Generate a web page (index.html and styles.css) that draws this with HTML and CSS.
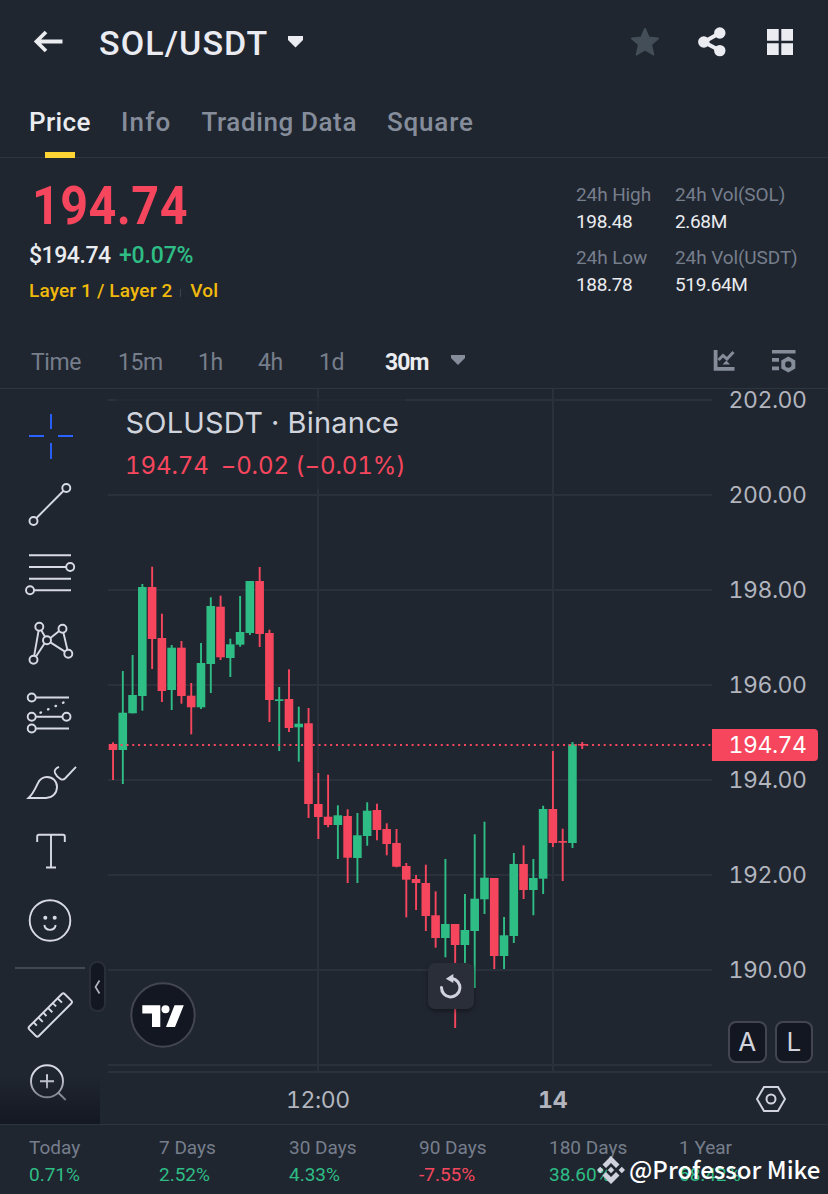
FILE: index.html
```html
<!DOCTYPE html>
<html lang="en">
<head>
    <meta charset="UTF-8">
    <meta name="viewport" content="width=device-width, initial-scale=1.0">
    <title>SOL/USDT</title>
    <link rel="stylesheet" href="styles.css">
</head>
<body>
    <header class="topbar">
        <svg class="back" width="30" height="24" viewBox="0 0 30 24"><path d="M13 2L3.5 11.5L13 21M4 11.5H29.5"/></svg>
        <h1 class="pair">SOL/USDT</h1>
        <svg class="caret" width="15" height="12" viewBox="0 0 15 12"><path d="M0 0H15V4L7.5 11.5L0 4Z"/></svg>
        <div class="top-actions">
            <svg class="star" width="30" height="30" viewBox="0 0 30 30"><path d="M15 2L18.7 10.6L28 11.4L21 17.6L23.3 27.5L15 22.5L6.7 27.5L9 17.6L2 11.4L11.3 10.6Z"/></svg>
            <svg class="share" width="30" height="30" viewBox="0 0 30 30"><path d="M22.8 6L6.8 15L22.8 23.6"/><circle cx="22.8" cy="6" r="5.7"/><circle cx="6.8" cy="15" r="5.7"/><circle cx="22.8" cy="23.6" r="5.7"/></svg>
            <svg class="apps" width="26" height="26" viewBox="0 0 26 26"><path d="M0 0H11.7V11.7H0ZM14.3 0H26V11.7H14.3ZM0 14.3H11.7V26H0ZM14.3 14.3H26V26H14.3Z"/></svg>
        </div>
    </header>

    <nav class="tabs">
        <a class="tab active">Price</a>
        <a class="tab tab-info">Info</a>
        <a class="tab tab-data">Trading Data</a>
        <a class="tab tab-square">Square</a>
    </nav>

    <section class="summary">
        <div class="quote">
            <div class="last-price">194.74</div>
            <div class="fiat">$194.74 <span class="up">+0.07%</span></div>
            <div class="tags"><span>Layer 1 / Layer 2</span><i class="tag-sep"></i><span>Vol</span></div>
        </div>
        <div class="stats">
            <div class="stat"><span>24h High</span><b>198.48</b></div>
            <div class="stat"><span>24h Vol(SOL)</span><b>2.68M</b></div>
            <div class="stat"><span>24h Low</span><b>188.78</b></div>
            <div class="stat"><span>24h Vol(USDT)</span><b>519.64M</b></div>
        </div>
    </section>

    <div class="intervals">
        <div class="interval-list">
            <span>Time</span>
            <span>15m</span>
            <span>1h</span>
            <span>4h</span>
            <span>1d</span>
            <span class="selected">30m</span>
        </div>
        <svg class="more" width="14" height="10" viewBox="0 0 14 10"><path d="M0 0H14V3L7 10L0 3Z"/></svg>
        <div class="interval-icons">
            <svg width="24" height="24" viewBox="0 0 24 24"><path class="line" d="M3.6 1V19.8H22.5" stroke-width="3.8"/><path class="line" d="M6.5 11L11 6.5L15 10L21.5 3" stroke-width="3"/><path d="M14.3 11.5L18 15.5H10.5Z"/></svg>
            <svg width="26" height="24" viewBox="0 0 26 24"><path d="M1 1H24.5V4.5H1ZM1 9H8V12.7H1ZM1 17.5H8V21.3H1Z"/><path fill-rule="evenodd" d="M17.3 7.5L24.3 11.5V19.5L17.3 23.5L10.3 19.5V11.5ZM17.3 12.3A3.2 3.2 0 1 0 17.3 18.7A3.2 3.2 0 1 0 17.3 12.3Z"/></svg>
        </div>
    </div>

    <main class="chart">
        <aside class="toolbar">
            <svg class="tool cross" viewBox="0 0 56 56"><path d="M29 6V21M29 35V51M7 28H22M36 28H51"/></svg>
            <svg class="tool" viewBox="0 0 56 56"><path d="M14.5 41L41.3 14"/><circle cx="44.3" cy="11" r="4"/><circle cx="11.5" cy="44" r="4"/></svg>
            <svg class="tool" viewBox="0 0 56 56"><path d="M7 9.3H49M7 21H44M7 32.7H49M12 44.3H49"/><circle cx="48.2" cy="21" r="4"/><circle cx="8" cy="44.3" r="4"/></svg>
            <svg class="tool" viewBox="0 0 56 56"><path d="M12.2 40.7L16.6 15.7M19.3 15.2L23 21.8M14 41.5L22.5 28.5M28.4 23L37.2 16M41.4 17.6L45.4 34.8M28.4 27.4L42.9 36.6"/><circle cx="17.3" cy="11.7" r="4"/><circle cx="40.5" cy="13.7" r="4"/><circle cx="25" cy="25.3" r="4"/><circle cx="46.3" cy="38.7" r="4"/><circle cx="11.5" cy="44.7" r="4"/></svg>
            <svg class="tool" viewBox="0 0 56 56"><path d="M14 13.5H47M14 32.8H40.5M14 44.5H47"/><path class="dots" d="M18.5 28.7L45 17"/><circle cx="9.7" cy="13.5" r="4"/><circle cx="9.7" cy="32.8" r="4"/><circle cx="44.5" cy="32.8" r="4"/><circle cx="9.7" cy="44.5" r="4"/></svg>
            <svg class="tool" viewBox="0 0 56 56"><path d="M6.5 44C12 39 14 32.5 16 29C18 25 21 23 25 23C31 23 35 27.5 35 33C35 39.5 30 44 24 44Z"/><path d="M37 12.8C34 14 31.5 16.5 33 19.2C34 21.5 36.5 24 38.7 25.2C40.5 26 42 25.5 43 24.5L54 12.8"/></svg>
            <svg class="tool" viewBox="0 0 56 56"><path d="M15.2 19V13.5Q15.2 11.7 17 11.7H41Q42.8 11.7 42.8 13.5V19M29 11.7V44.5M24 44.5H34"/></svg>
            <svg class="tool" viewBox="0 0 56 56"><circle cx="28" cy="28.5" r="20.3"/><path d="M22.3 33C23.5 39.5 32.5 39.5 33.7 33"/><circle class="eye" cx="23.3" cy="25.7" r="2"/><circle class="eye" cx="32.7" cy="25.7" r="2"/></svg>
            <hr class="tool-sep">
            <svg class="tool" viewBox="0 0 56 56"><g transform="translate(28.3 29) rotate(-45)"><rect x="-25" y="-6.7" width="50" height="13.4" rx="2"/><path d="M-17 -6.7V-2M-10.2 -6.7V-.5M-3.4 -6.7V-2M3.4 -6.7V-.5M10.2 -6.7V-2M17 -6.7V-.5"/></g></svg>
            <svg class="tool" viewBox="0 0 56 56"><circle cx="25" cy="26.3" r="16"/><path d="M18 26.3H32M25 19.3V33.3M36.3 37.7L43.7 45"/></svg>
            <div class="toolbar-fade"></div>
            <div class="collapse"><svg width="7" height="14" viewBox="0 0 7 14"><path d="M5.5 .5L1.5 7L5.5 13.5"/></svg></div>
        </aside>

        <div class="plot">
            <svg class="candles" id="candles" width="612" height="682" viewBox="100 389 612 682">
                <path class="grid" d="M108 400H712M108 495H712M108 590H712M108 685H712M108 780H712M108 875H712M108 970H712M108 1065H712M318 389V1071M553 389V1071"/>
            </svg>
            <div class="legend">
                <div class="symbol">SOLUSDT · Binance</div>
                <div class="change"><span>194.74</span><span>−0.02 (−0.01%)</span></div>
            </div>
            <svg class="tv-logo" width="66" height="66" viewBox="0 0 66 66">
                <circle class="disc" cx="33" cy="33" r="31.7"/>
                <path d="M12.3 23.3H30.3V45H22V31.5H12.3ZM44.5 23.3H53.8L45 45H36Z"/>
                <circle cx="35.5" cy="27.3" r="4"/>
            </svg>
            <button class="reset"><svg width="24" height="26" viewBox="0 0 24 26"><path class="arc" d="M2.5 14.5A9.2 9.2 0 1 0 13 5.6"/><path d="M6.8 5.8L14.3 1V10Z"/></svg></button>
        </div>

        <div class="price-axis">
            <span>202.00</span>
            <span>200.00</span>
            <span>198.00</span>
            <span>196.00</span>
            <span>194.00</span>
            <span>192.00</span>
            <span>190.00</span>
            <div class="price-tag">194.74</div>
            <div class="scale-buttons"><button>A</button><button>L</button></div>
        </div>

        <div class="time-axis">
            <span class="time-label">12:00</span>
            <span class="time-label day">14</span>
            <svg class="gear" width="30" height="26" viewBox="0 0 30 26"><path d="M8 1H22L29 13L22 25H8L1 13Z"/><circle cx="15" cy="13" r="4.5"/></svg>
        </div>
    </main>

    <footer class="performance">
        <div class="period"><span>Today</span><b class="up">0.71%</b></div>
        <div class="period"><span>7 Days</span><b class="up">2.52%</b></div>
        <div class="period"><span>30 Days</span><b class="up">4.33%</b></div>
        <div class="period"><span>90 Days</span><b class="down">-7.55%</b></div>
        <div class="period"><span>180 Days</span><b class="up">38.60%</b></div>
        <div class="period"><span>1 Year</span><b class="up">68.42%</b></div>
        <div class="watermark">
            <svg width="28" height="28" viewBox="0 0 28 28"><path d="M14 0L22.5 8.5L19 12L14 7L9 12L5.5 8.5ZM14 28L22.5 19.5L19 16L14 21L9 16L5.5 19.5ZM14 10.8L17.2 14L14 17.2L10.8 14ZM3.2 10.8L6.4 14L3.2 17.2L0 14ZM24.8 10.8L28 14L24.8 17.2L21.6 14Z"/></svg>
            <span>@Professor Mike</span>
        </div>
    </footer>

    <script src="chart.js"></script>
</body>
</html>
```

FILE: styles.css
```css
* {
    box-sizing: border-box;
}
body {
    margin: 0;
    width: 828px;
    height: 1194px;
    overflow: hidden;
    background-color: #202630;
    color: #eaecef;
    font-family: Roboto, "Liberation Sans", sans-serif;
}
svg {
    display: block;
    flex: none;
}
button {
    padding: 0;
    font: inherit;
    color: inherit;
}
.up {
    color: #2ebd85;
}
.down {
    color: #f6465d;
}

/* header */
.topbar {
    display: flex;
    align-items: center;
    height: 84px;
    padding: 0 35px 0 33px;
}
.back {
    fill: none;
    stroke: #eaecef;
    stroke-width: 3.8;
    margin-right: 36px;
}
.pair {
    margin: 2px 0 0;
    font-size: 34px;
    font-weight: 500;
    letter-spacing: 1.1px;
    color: #eaecf2;
    width: 189px;
}
.caret {
    fill: #eaecf2;
    margin-top: -1px;
}
.top-actions {
    display: flex;
    align-items: center;
    margin-left: auto;
    gap: 38px;
}
.star {
    fill: #434e58;
    stroke: #434e58;
    stroke-width: 2;
    stroke-linejoin: round;
}
.share {
    fill: #eaecf2;
    margin-left: -1px;
}
.share path {
    fill: none;
    stroke: #eaecf2;
    stroke-width: 4;
}
.apps {
    fill: #eaecf2;
    margin-left: 2px;
}

/* tabs */
.tabs {
    display: flex;
    height: 74px;
    padding: 3px 0 0 29px;
    border-bottom: 1px solid #2e353f;
}
.tab {
    position: relative;
    margin-right: 30px;
    font-size: 26px;
    font-weight: 500;
    line-height: 71px;
    letter-spacing: 0.4px;
    color: #858d9b;
}
.tab.active {
    color: #eaecef;
}
.tab.active::after {
    content: "";
    position: absolute;
    left: 16px;
    bottom: -1px;
    width: 30px;
    height: 6px;
    background-color: #fcd535;
}
.tab-info {
    letter-spacing: 1.2px;
}
.tab-data {
    letter-spacing: 0.6px;
}
.tab-square {
    letter-spacing: 0.8px;
}

/* price summary */
.summary {
    display: flex;
    justify-content: space-between;
    height: 176px;
    padding: 18px 0 0 29px;
}
.last-price {
    margin-left: 3px;
    font-size: 53px;
    font-weight: 700;
    line-height: 60px;
    color: #f6465d;
    letter-spacing: 0.5px;
    transform: scaleX(0.915);
    transform-origin: left;
}
.fiat {
    margin-top: 3px;
    font-size: 23px;
    font-weight: 500;
    line-height: 34px;
    letter-spacing: -0.45px;
}
.fiat .up {
    margin-left: 3px;
    letter-spacing: -0.15px;
}
.tags {
    display: flex;
    align-items: center;
    margin-top: 3px;
    font-size: 19px;
    font-weight: 500;
    line-height: 30px;
    letter-spacing: 0.15px;
    color: #f0b90b;
}
.tag-sep {
    width: 1px;
    height: 8px;
    margin: 4px 9px 0 8px;
    background-color: #3c444f;
}
.stats {
    display: grid;
    grid-template-columns: 99px 153px;
    align-content: start;
    row-gap: 9px;
    padding-top: 5px;
}
.stat span, .stat b {
    display: block;
    font-size: 19px;
    font-weight: 400;
    line-height: 27px;
    letter-spacing: -0.1px;
}
.stat b {
    letter-spacing: -0.35px;
}
.stat span {
    color: #767e8c;
}

/* interval row */
.intervals {
    display: flex;
    align-items: center;
    height: 55px;
    padding: 0 31px 0 31px;
    border-bottom: 1px solid #2e353f;
    font-size: 23px;
    color: #767e8c;
}
.interval-list {
    display: grid;
    grid-template-columns: 87px 80px 60px 61px 66px 66px;
    padding-top: 2px;
    letter-spacing: -0.4px;
}
.selected {
    color: #eaecef;
    font-weight: 700;
    letter-spacing: -0.9px;
}
.more {
    fill: #858d9b;
    margin-top: -2px;
}
.interval-icons {
    display: flex;
    gap: 35px;
    margin-left: auto;
    fill: #858d9b;
}
.interval-icons .line {
    fill: none;
    stroke: #858d9b;
}

/* chart */
.chart {
    display: grid;
    grid-template-columns: 100px 612px 116px;
    grid-template-rows: 682px 53px;
    font-family: Inter, "Liberation Sans", sans-serif;
    font-variant-numeric: tabular-nums;
}
.toolbar {
    position: relative;
    display: flex;
    flex-direction: column;
    grid-row: 1 / 3;
    padding-top: 12px;
}
.tool {
    width: 56px;
    height: 56px;
    margin: 6.6px 0 6.6px 22px;
    fill: none;
    stroke: #d8dae3;
    stroke-width: 1.9;
}
.cross {
    stroke: #2962ff;
}
.tool .dots {
    stroke-width: 2.4;
    stroke-linecap: round;
    stroke-dasharray: 0.5 7.7;
}
.tool .eye {
    fill: #d8dae3;
    stroke: none;
}
.tool-sep {
    width: 70px;
    height: 2px;
    margin: 12px 0 11px 15px;
    border: 0;
    background-color: #434954;
}
.toolbar-fade {
    position: absolute;
    left: 0;
    bottom: 0;
    width: 100px;
    height: 50px;
    background: linear-gradient(to bottom, rgba(19, 23, 34, 0), rgba(19, 23, 34, 0.95));
}
.collapse {
    position: absolute;
    left: 89px;
    top: 572px;
    width: 17px;
    height: 51px;
    border: 2px solid #2a2e39;
    border-radius: 8px;
    background-color: #131722;
    display: flex;
    align-items: center;
    justify-content: center;
}
.collapse path {
    fill: none;
    stroke: #b2b5be;
    stroke-width: 1.7;
}
.plot {
    position: relative;
}
.grid {
    fill: none;
    stroke: #2b313c;
    stroke-width: 2;
}
.wick.up, .body.up {
    fill: #2ebd85;
}
.wick.down, .body.down {
    fill: #f6465d;
}
.last-line {
    stroke: #f6465d;
    stroke-width: 2;
    stroke-dasharray: 2 3.82;
}
.legend {
    position: absolute;
    left: 16px;
    top: 9px;
    width: 290px;
    padding: 4px 0 0 9.5px;
    background-color: rgba(32, 38, 48, 0.6);
}
.symbol {
    font-size: 29px;
    line-height: 41px;
    letter-spacing: 0.2px;
    color: #d1d4dc;
    white-space: nowrap;
}
.change {
    display: flex;
    gap: 12px;
    margin-left: -0.5px;
    font-size: 24px;
    line-height: 46px;
    letter-spacing: -0.1px;
    color: #f6465d;
    white-space: nowrap;
}
.tv-logo {
    position: absolute;
    left: 30px;
    top: 593px;
    fill: #fff;
}
.disc {
    fill: #131722;
    stroke: #434651;
    stroke-width: 2;
}
.reset {
    position: absolute;
    left: 328px;
    top: 574px;
    width: 46px;
    height: 46px;
    border: 0;
    border-radius: 7px;
    background-color: #2a2e39;
    box-shadow: 0 2px 5px rgba(0, 0, 0, 0.4);
}
.reset svg {
    margin: 0 auto;
    fill: #d1d4dc;
}
.reset .arc {
    fill: none;
    stroke: #d1d4dc;
    stroke-width: 3;
    stroke-linecap: round;
}
.price-axis {
    position: relative;
    display: flex;
    flex-direction: column;
    gap: 73px;
    padding-left: 16.5px;
    font-size: 23px;
    line-height: 22px;
    letter-spacing: -0.45px;
    color: #b2b5be;
}
.price-tag {
    position: absolute;
    left: 0;
    top: 340px;
    width: 106px;
    height: 32px;
    padding-left: 16.5px;
    line-height: 32px;
    border-radius: 0 4px 4px 0;
    background-color: #f6465d;
    color: #fff;
}
.scale-buttons {
    position: absolute;
    left: 16px;
    top: 632px;
    display: flex;
    gap: 8px;
}
.scale-buttons button {
    width: 38.5px;
    height: 42px;
    border: 2px solid #434651;
    border-radius: 8px;
    background-color: #131722;
    color: #d1d4dc;
    font-size: 26px;
    letter-spacing: 0;
}
.time-axis {
    display: grid;
    grid-column: 2 / 4;
    grid-template-columns: 436px 150px 134px;
    align-items: center;
    margin-left: 8px;
    border-top: 2px solid #2b313c;
    font-size: 23px;
    letter-spacing: -0.4px;
    color: #b2b5be;
}
.time-label {
    padding: 2px 0 0 178px;
}
.time-label.day {
    padding-left: 0;
    margin-left: -6px;
    font-weight: 700;
    letter-spacing: 0;
}
.gear {
    margin-left: 62px;
    fill: none;
    stroke: #d1d4dc;
    stroke-width: 2;
}

/* performance footer */
.performance {
    position: relative;
    display: grid;
    grid-template-columns: repeat(6, 130px);
    height: 70px;
    padding: 10px 0 0 29px;
    border-top: 1px solid #2e353f;
}
.period span, .period b {
    display: block;
    font-size: 19px;
    font-weight: 400;
    line-height: 26.5px;
}
.period span {
    color: #767e8c;
}
.watermark {
    position: absolute;
    left: 597px;
    top: 28px;
    display: flex;
    align-items: center;
    gap: 4px;
    font-family: "Noto Sans CJK SC", "Noto Sans", sans-serif;
    font-size: 24px;
    font-weight: 500;
    line-height: 34px;
    color: #fff;
    white-space: nowrap;
}
.watermark span {
    margin-top: -1px;
}
.watermark svg {
    fill: #cfd1dc;
}
```

FILE: chart.js
```js
// 30m candles as [direction, wick top, body top, body bottom, wick bottom]
const candles = [
    ['down', 742.3, 744, 750, 780],
    ['up', 671, 712.7, 750, 784],
    ['up', 655, 695, 713.3, 713.3],
    ['up', 584, 587, 696, 710.7],
    ['down', 566.7, 587, 639, 669],
    ['down', 613.7, 638, 691, 702],
    ['up', 645, 647.7, 690, 710],
    ['down', 641, 647.7, 696, 703.7],
    ['down', 683, 695.7, 707.3, 734.3],
    ['up', 643, 663, 707.3, 709],
    ['up', 597.3, 606, 664, 693],
    ['down', 595.7, 606.7, 657.3, 660],
    ['up', 638.7, 644.3, 658, 677],
    ['up', 596, 632, 644.7, 646.7],
    ['up', 581, 581, 633, 635],
    ['down', 567, 581, 634, 647],
    ['down', 629.7, 633, 700, 722],
    ['up', 687, 699.3, 701, 751],
    ['down', 669.3, 699, 728, 732],
    ['up', 706.7, 723.7, 727.3, 761.7],
    ['down', 708, 723.3, 804, 818],
    ['down', 773, 804, 817, 839],
    ['down', 774.7, 816.7, 825, 827.3],
    ['up', 805.3, 815.3, 825, 859],
    ['down', 809.3, 816, 857.7, 883],
    ['up', 813, 835.3, 858, 883],
    ['up', 802.3, 810.7, 836, 845.7],
    ['down', 803.7, 810, 830, 840.3],
    ['down', 823.3, 829, 844, 855.3],
    ['down', 829, 843, 866.7, 867.3],
    ['down', 863, 866, 879.7, 917.3],
    ['down', 875, 879, 883, 910],
    ['down', 864.7, 883, 916, 931],
    ['down', 891.3, 915.3, 938, 947.7],
    ['up', 859, 924, 938, 957.3],
    ['down', 924, 924, 945, 1028],
    ['up', 894, 930, 945, 970],
    ['up', 834.3, 898.7, 931, 988],
    ['up', 821.7, 877.7, 899.3, 914],
    ['down', 878, 878, 956, 969],
    ['up', 917, 935.3, 956, 969],
    ['up', 853, 864, 936, 943],
    ['down', 845.3, 864, 890, 899],
    ['up', 859, 878, 890, 915.3],
    ['up', 805.7, 809, 878.7, 894],
    ['down', 751, 809, 843, 847],
    ['down', 828.7, 841, 842.7, 881],
    ['up', 742, 744.3, 843, 848],
    ['down', 742, 744, 745.5, 749]
];

const svg = document.getElementById('candles');

function addShape(name, attrs) {
    const el = document.createElementNS('http://www.w3.org/2000/svg', name);
    Object.keys(attrs).forEach(key => el.setAttribute(key, attrs[key]));
    svg.appendChild(el);
}

candles.forEach(([dir, high, top, bottom, low], i) => {
    const x = 113 + i * 9.775;
    addShape('rect', { class: 'wick ' + dir, x: x - 0.9, y: high, width: 1.9, height: low - high });
    addShape('rect', { class: 'body ' + dir, x: x - 4.3, y: top, width: 8.6, height: bottom - top });
});

// last price
addShape('path', { class: 'last-line', d: 'M109 745H712' });
```
